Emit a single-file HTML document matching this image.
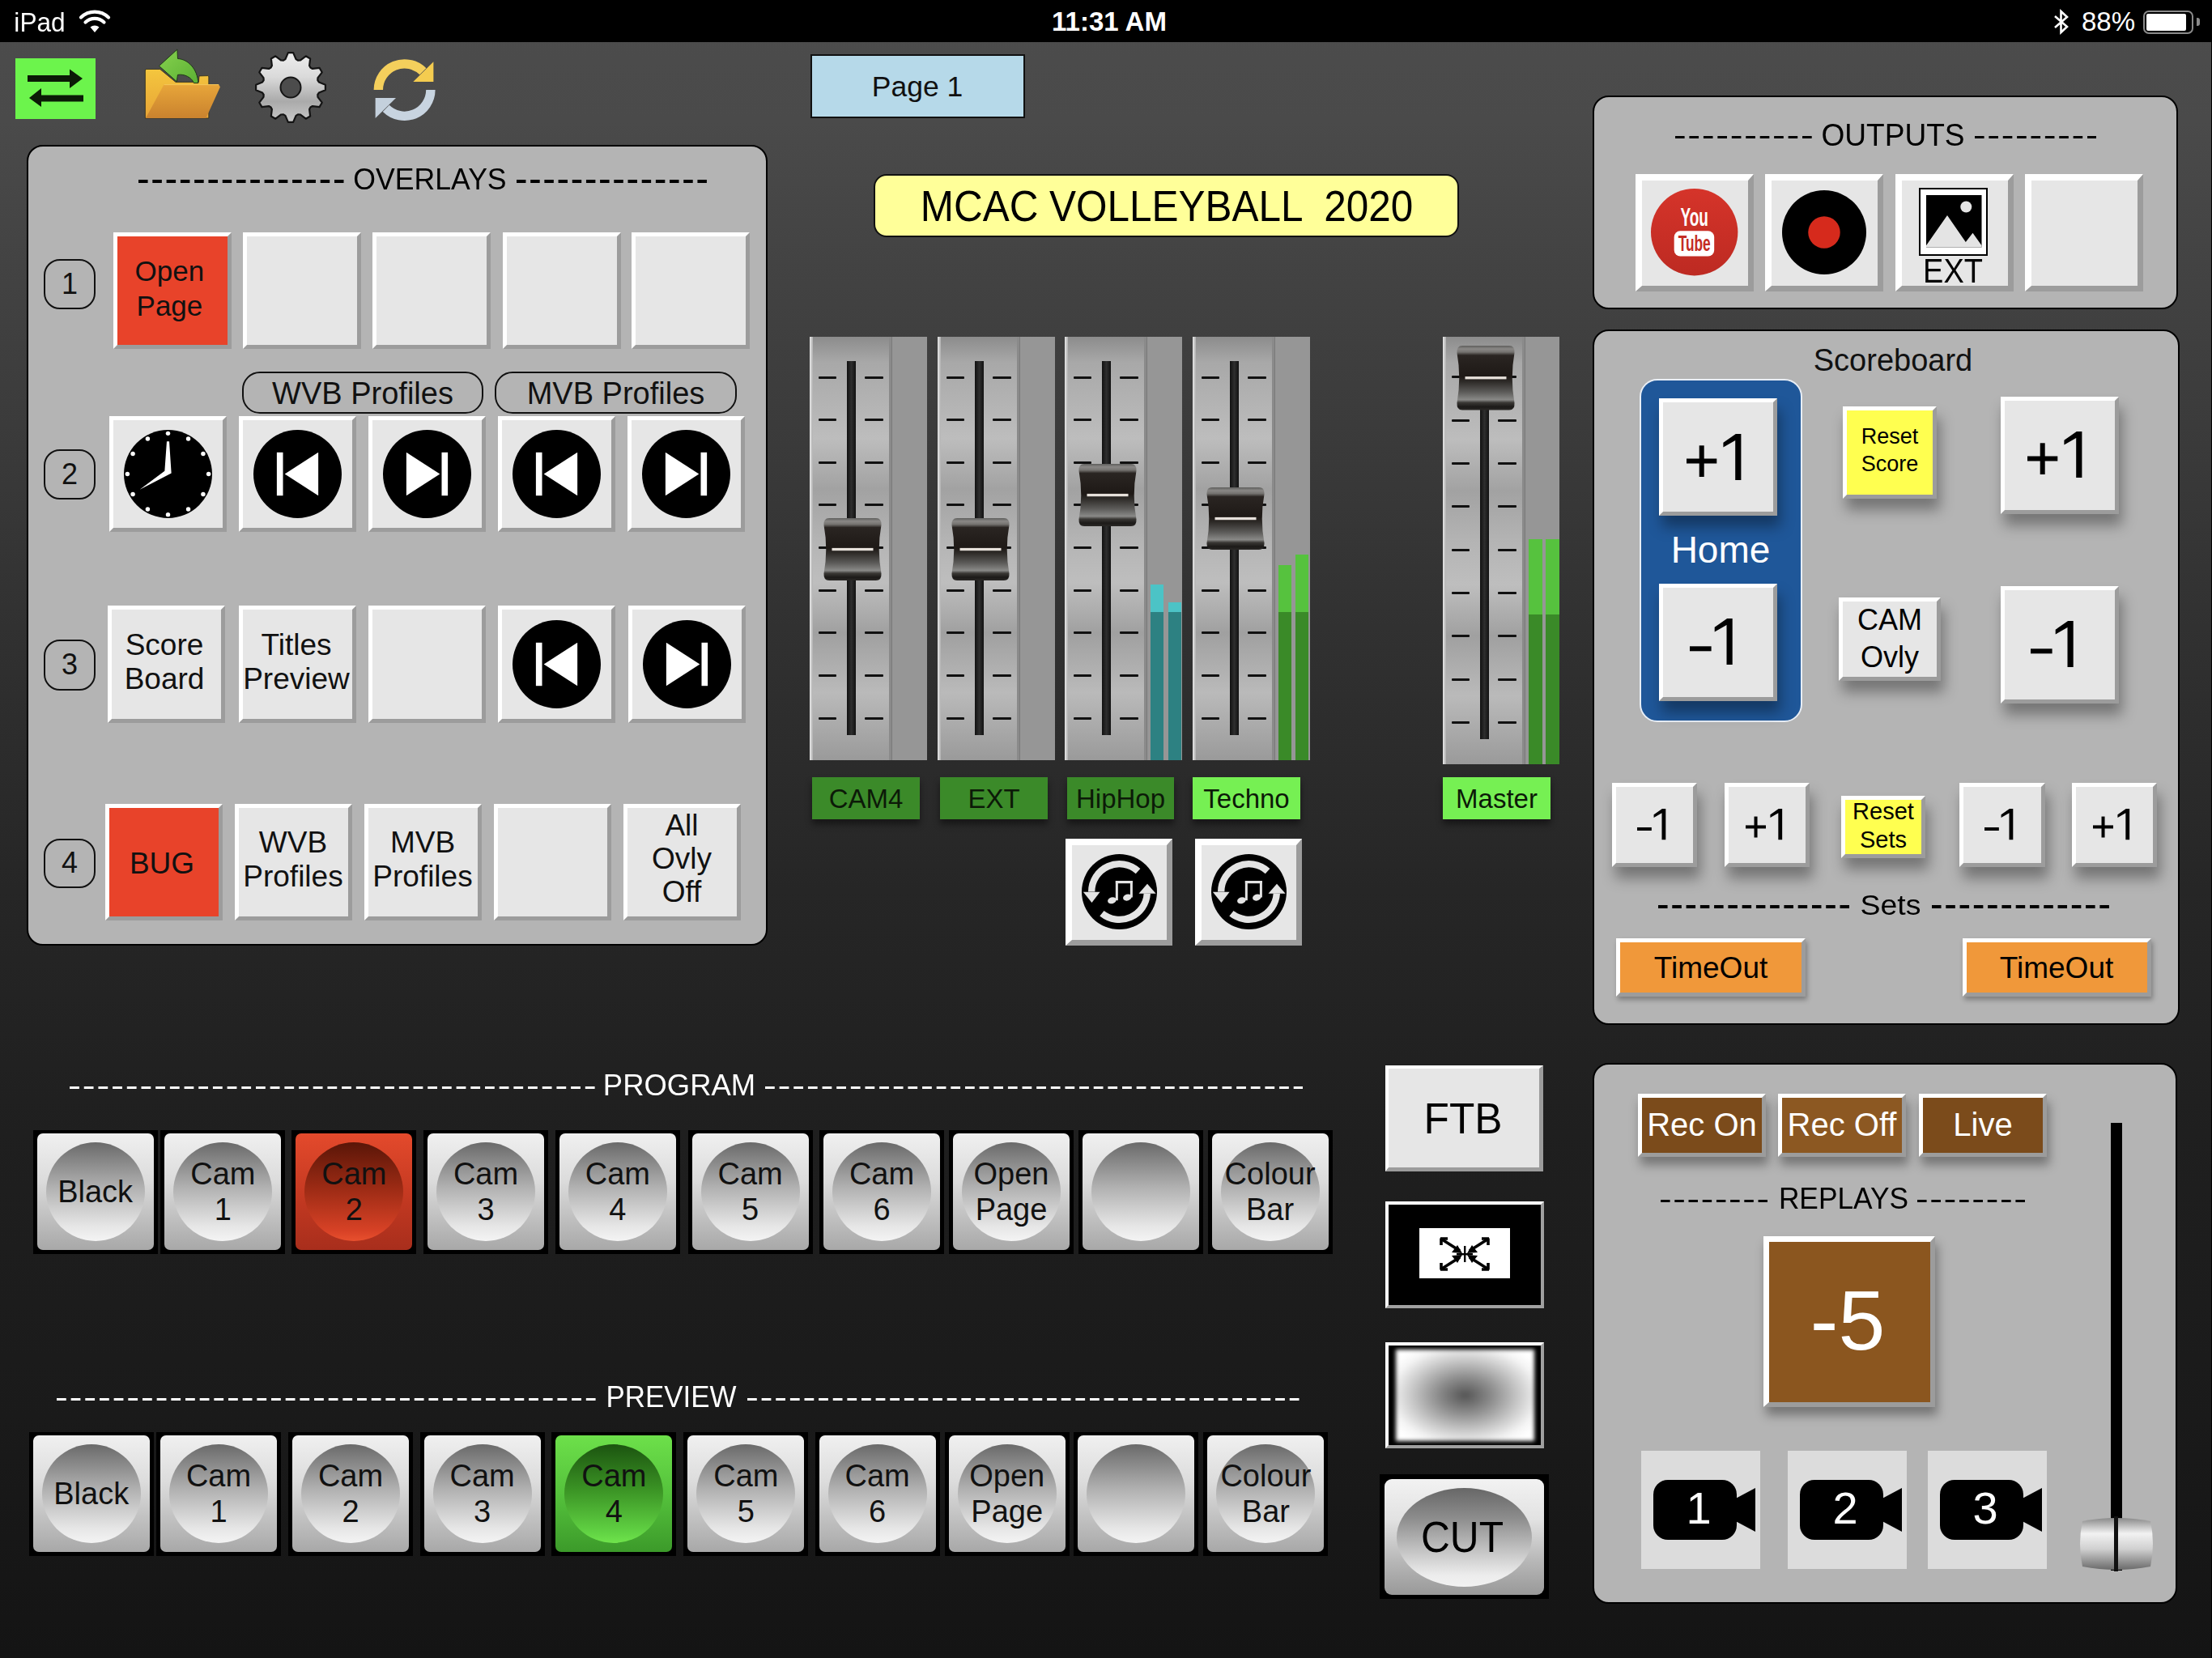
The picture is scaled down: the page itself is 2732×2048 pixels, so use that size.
<!DOCTYPE html><html><head><meta charset="utf-8"><style>
*{margin:0;padding:0;box-sizing:content-box}
html,body{width:2732px;height:2048px;overflow:hidden}
body{position:relative;font-family:"Liberation Sans",sans-serif;
background:linear-gradient(180deg,#4c4c4c 0px,#4a4a4a 150px,#3e3e3e 450px,#303030 800px,#262626 1100px,#1f1f1f 1400px,#1a1a1a 1750px,#141414 2048px);}
body>div{position:absolute}
.t{position:absolute;line-height:1;white-space:pre}
svg{position:absolute;overflow:visible}

.sl{background:linear-gradient(180deg,#8c8c8c 0%,#a8a8a8 6%,#bdbdbd 24%,#a2a2a2 36%,#b4b4b4 48%,#bebebe 58%,#a0a0a0 70%,#bababa 84%,#9a9a9a 100%);}
.sl:before{content:"";position:absolute;left:0;top:0;bottom:0;width:4px;background:linear-gradient(90deg,#e8e8e8,#b0b0b0)}
.sl:after{content:"";position:absolute;right:0;top:0;bottom:0;width:3px;background:#8a8a8a}
.mt{background:#969696;border-left:1px solid #7a7a7a;box-sizing:border-box}

.pb{background:linear-gradient(180deg,#f0f0f0 0%,#dcdcdc 40%,#a8a8a8 100%);border-radius:7px}
.pr{background:linear-gradient(180deg,#e44a2c 0%,#c63a22 50%,#a82e1c 100%);border-radius:7px}
.pg{background:linear-gradient(180deg,#6de04a 0%,#55c23c 50%,#3c9a2a 100%);border-radius:7px}
.cc{border-radius:50%;background:linear-gradient(180deg,#6a6a6a 0%,#b0b0b0 45%,#e6e6e6 85%,#f4f4f4 100%)}
.cr{border-radius:50%;background:linear-gradient(180deg,#5a1608 0%,#9a2a14 45%,#d84226 90%,#e8502e 100%)}
.cg{border-radius:50%;background:linear-gradient(180deg,#1c5410 0%,#3a9224 45%,#62d444 90%,#70e44c 100%)}
</style></head><body><div style="left:0px;top:0px;width:2732px;height:52px;background:#000"></div>
<div style="left:2731px;top:52px;width:1px;height:1996px;background:#000"></div>
<div class="t" style="left:-551.5px;width:1200px;text-align:center;top:9.6px;font-size:34px;color:#fff;font-weight:normal;transform:scaleX(0.93);">iPad</div>
<div class="t" style="left:770px;width:1200px;text-align:center;top:10.3px;font-size:33px;color:#fff;font-weight:bold;">11:31 AM</div>
<div class="t" style="left:1437px;width:1200px;text-align:right;top:10.3px;font-size:33px;color:#fff;font-weight:normal;">88%</div>
<svg style="left:98px;top:13px" width="38" height="28" viewBox="0 0 38 28"><path d="M19 27 L13.5 20.5 A8.5 8.5 0 0 1 24.5 20.5 Z" fill="#fff"/><path d="M7.5 14.5 A16.5 16.5 0 0 1 30.5 14.5" stroke="#fff" stroke-width="4.2" fill="none" stroke-linecap="round"/><path d="M2 8.5 A24.5 24.5 0 0 1 36 8.5" stroke="#fff" stroke-width="4.2" fill="none" stroke-linecap="round"/></svg>
<svg style="left:2536px;top:11px" width="20" height="32" viewBox="0 0 20 32"><path d="M2 9 L17 22 L9.5 29 L9.5 3 L17 10 L2 23" stroke="#fff" stroke-width="2.6" fill="none" stroke-linejoin="miter"/></svg>
<div style="left:2647px;top:13px;width:62px;height:29px;border:2.5px solid #8a8a8a;border-radius:7px;box-sizing:border-box"></div>
<div style="left:2651px;top:17px;width:49px;height:21px;background:#fff;border-radius:2px"></div>
<div style="left:2713px;top:22px;width:4px;height:10px;background:#8a8a8a;border-radius:0 3px 3px 0"></div>
<div style="left:19px;top:72px;width:99px;height:75px;background:#6cf44c"></div>
<svg style="left:19px;top:72px" width="99" height="75" viewBox="0 0 99 75"><rect x="15" y="21" width="53" height="8" fill="#0b1a06"/><path d="M67 13.5 L83 25 L67 37 Z" fill="#0b1a06"/><rect x="31" y="45.5" width="53" height="8" fill="#0b1a06"/><path d="M32 37 L17 49 L32 60 Z" fill="#0b1a06"/></svg>
<svg style="left:170px;top:55px" width="110" height="100" viewBox="0 0 110 100"><defs><linearGradient id="fg1" x1="0" y1="0" x2="0" y2="1"><stop offset="0" stop-color="#f4c63e"/><stop offset="1" stop-color="#e8a436"/></linearGradient><linearGradient id="fg2" x1="0" y1="0" x2="0" y2="1"><stop offset="0" stop-color="#e8a63a"/><stop offset="1" stop-color="#c9822e"/></linearGradient><linearGradient id="ag" x1="0" y1="0" x2="1" y2="1"><stop offset="0" stop-color="#86d24e"/><stop offset="1" stop-color="#5cb034"/></linearGradient></defs><path d="M9.35 32 Q9.35 30.5 11 30.5 L27.7 30.5 L47 46.4 L75.4 46.4 L76 38.9 L86.9 38.6 Q87.8 39 87.8 40 L87.8 91 L9.35 91 Z" fill="url(#fg1)" stroke="#2a2a1a" stroke-width="0.8"/><path d="M26.5 26.5 L48.9 6 L49.5 17.5 C62 18 74 30 74.8 47.6 L69.4 47.6 C67 41 58 36 49.5 37.4 L48.3 45.8 Z" fill="url(#ag)" stroke="#20361a" stroke-width="1"/><path d="M32.6 49.2 L100.1 49.2 L101.9 52.5 L84.4 91.1 L9.95 91.1 Z" fill="url(#fg2)"/><path d="M32.6 49.6 L100.1 49.6" stroke="#f6c85a" stroke-width="1"/></svg>
<svg style="left:309.1px;top:57.6px" width="100" height="100" viewBox="0 0 100 100"><defs><linearGradient id="gg" x1="0" y1="0" x2="0" y2="1"><stop offset="0" stop-color="#eeeeee"/><stop offset="0.35" stop-color="#dadada"/><stop offset="0.7" stop-color="#aaaaaa"/><stop offset="1" stop-color="#cacaca"/></linearGradient></defs><path d="M41.07 16.68 L43.47 15.11 L46.85 7.12 L53.15 7.12 L56.53 15.11 L58.93 16.68 L61.79 16.52 L68.71 11.29 L74.17 14.44 L73.10 23.05 L74.40 25.60 L76.95 26.90 L85.56 25.83 L88.71 31.29 L83.48 38.21 L83.32 41.07 L84.89 43.47 L92.88 46.85 L92.88 53.15 L84.89 56.53 L83.32 58.93 L83.48 61.79 L88.71 68.71 L85.56 74.17 L76.95 73.10 L74.40 74.40 L73.10 76.95 L74.17 85.56 L68.71 88.71 L61.79 83.48 L58.93 83.32 L56.53 84.89 L53.15 92.88 L46.85 92.88 L43.47 84.89 L41.07 83.32 L38.21 83.48 L31.29 88.71 L25.83 85.56 L26.90 76.95 L25.60 74.40 L23.05 73.10 L14.44 74.17 L11.29 68.71 L16.52 61.79 L16.68 58.93 L15.11 56.53 L7.12 53.15 L7.12 46.85 L15.11 43.47 L16.68 41.07 L16.52 38.21 L11.29 31.29 L14.44 25.83 L23.05 26.90 L25.60 25.60 L26.90 23.05 L25.83 14.44 L31.29 11.29 L38.21 16.52 Z" fill="url(#gg)" stroke="#141414" stroke-width="2.2" stroke-linejoin="round"/><circle cx="50" cy="50" r="12.5" fill="#4c4c4c" stroke="#141414" stroke-width="2"/></svg>
<svg style="left:450px;top:62px" width="100" height="98" viewBox="0 0 100 98"><path d="M17.3 49.1 A32.3 32.3 0 0 1 72.4 26.3" stroke="#f4cf5c" stroke-width="11.4" fill="none"/><path d="M60.3 39 L85.4 39 L85.4 14.2 Z" fill="#f4cc50"/><path d="M81.9 49.1 A32.3 32.3 0 0 1 26.8 71.9" stroke="#c8d4e0" stroke-width="11.4" fill="none"/><path d="M13.6 59.1 L39 59.1 L13.6 83.9 Z" fill="#c4d0dc"/></svg>
<div style="left:1001px;top:67px;width:265px;height:79px;background:#b6d9e9;border:2px solid #111;box-sizing:border-box"></div>
<div class="t" style="left:533px;width:1200px;text-align:center;top:89.8px;font-size:35.5px;color:#111;font-weight:normal;">Page 1</div>
<div style="left:1079px;top:215px;width:723px;height:78px;background:#ffff99;border:2px solid #111;border-radius:16px;box-sizing:border-box"></div>
<div class="t" style="left:840.5px;width:1200px;text-align:center;top:226.9px;font-size:54px;color:#000;font-weight:normal;transform:scaleX(0.916);">MCAC VOLLEYBALL  2020</div>
<div style="left:33px;top:179px;width:915px;height:989px;background:#b4b4b4;border:2.5px solid #000;border-radius:20px;box-sizing:border-box"></div>
<div class="t" style="left:-69.10000000000002px;width:1200px;text-align:center;top:202.7px;font-size:37px;color:#000;font-weight:normal;transform:scaleX(0.962);">OVERLAYS</div>
<div style="left:171px;top:222.1px;width:253.5px;height:3.6px;background-image:linear-gradient(90deg,transparent 0 5.786px,#000 5.786px 17.286px);background-size:17.286px 100%;background-repeat:repeat-x;background-position:right top"></div>
<div style="left:638px;top:222.1px;width:235px;height:3.6px;background-image:linear-gradient(90deg,#000 0 11.5px,transparent 11.5px 17.192px);background-size:17.192px 100%;background-repeat:repeat-x;background-position:left top"></div>
<div style="left:54px;top:320px;width:64px;height:62px;border:2px solid #111;border-radius:20px;box-sizing:border-box"></div>
<div style="left:54px;top:555px;width:64px;height:62px;border:2px solid #111;border-radius:20px;box-sizing:border-box"></div>
<div style="left:54px;top:790px;width:64px;height:63px;border:2px solid #111;border-radius:20px;box-sizing:border-box"></div>
<div style="left:54px;top:1036px;width:64px;height:61px;border:2px solid #111;border-radius:20px;box-sizing:border-box"></div>
<div class="t" style="left:-514px;width:1200px;text-align:center;top:332.8px;font-size:36px;color:#111;font-weight:normal;">1</div>
<div class="t" style="left:-514px;width:1200px;text-align:center;top:567.8px;font-size:36px;color:#111;font-weight:normal;">2</div>
<div class="t" style="left:-514px;width:1200px;text-align:center;top:803.3px;font-size:36px;color:#111;font-weight:normal;">3</div>
<div class="t" style="left:-514px;width:1200px;text-align:center;top:1048.3px;font-size:36px;color:#111;font-weight:normal;">4</div>
<div style="left:140px;top:287px;width:136px;height:134px;background:#e8432a;border-style:solid;border-width:5px 5px 5px 5px;border-color:#ffffff #9c9c9c #9c9c9c #ffffff;"></div>
<div style="left:300px;top:287px;width:136px;height:134px;background:#e6e6e6;border-style:solid;border-width:5px 5px 5px 5px;border-color:#ffffff #9c9c9c #9c9c9c #ffffff;"></div>
<div style="left:460px;top:287px;width:136px;height:134px;background:#e6e6e6;border-style:solid;border-width:5px 5px 5px 5px;border-color:#ffffff #9c9c9c #9c9c9c #ffffff;"></div>
<div style="left:621px;top:287px;width:136px;height:134px;background:#e6e6e6;border-style:solid;border-width:5px 5px 5px 5px;border-color:#ffffff #9c9c9c #9c9c9c #ffffff;"></div>
<div style="left:780px;top:287px;width:136px;height:134px;background:#e6e6e6;border-style:solid;border-width:5px 5px 5px 5px;border-color:#ffffff #9c9c9c #9c9c9c #ffffff;"></div>
<div class="t" style="left:-390.6px;width:1200px;text-align:center;top:316.5px;font-size:35px;color:#111;font-weight:normal;">Open</div>
<div class="t" style="left:-390.6px;width:1200px;text-align:center;top:359.9px;font-size:35px;color:#111;font-weight:normal;">Page</div>
<div style="left:299px;top:459px;width:298px;height:52px;border:2px solid #111;border-radius:22px;box-sizing:border-box"></div>
<div style="left:611px;top:459px;width:299px;height:52px;border:2px solid #111;border-radius:22px;box-sizing:border-box"></div>
<div class="t" style="left:-152px;width:1200px;text-align:center;top:466.5px;font-size:38px;color:#111;font-weight:normal;">WVB Profiles</div>
<div class="t" style="left:160.5px;width:1200px;text-align:center;top:466.5px;font-size:38px;color:#111;font-weight:normal;">MVB Profiles</div>
<div style="left:135px;top:514px;width:135px;height:133px;background:#e6e6e6;border-style:solid;border-width:5px 5px 5px 5px;border-color:#ffffff #9c9c9c #9c9c9c #ffffff;"></div>
<div style="left:295px;top:514px;width:135px;height:133px;background:#e6e6e6;border-style:solid;border-width:5px 5px 5px 5px;border-color:#ffffff #9c9c9c #9c9c9c #ffffff;"></div>
<div style="left:455px;top:514px;width:135px;height:133px;background:#e6e6e6;border-style:solid;border-width:5px 5px 5px 5px;border-color:#ffffff #9c9c9c #9c9c9c #ffffff;"></div>
<div style="left:615px;top:514px;width:135px;height:133px;background:#e6e6e6;border-style:solid;border-width:5px 5px 5px 5px;border-color:#ffffff #9c9c9c #9c9c9c #ffffff;"></div>
<div style="left:775px;top:514px;width:135px;height:133px;background:#e6e6e6;border-style:solid;border-width:5px 5px 5px 5px;border-color:#ffffff #9c9c9c #9c9c9c #ffffff;"></div>
<svg style="left:153.0px;top:531.0px" width="109" height="109" viewBox="-50 -50 100 100"><circle r="50" fill="#000"/><circle cx="0.00" cy="-46.00" r="2.5" fill="#fff"/><circle cx="23.00" cy="-39.84" r="2.5" fill="#fff"/><circle cx="39.84" cy="-23.00" r="2.5" fill="#fff"/><circle cx="46.00" cy="-0.00" r="2.5" fill="#fff"/><circle cx="39.84" cy="23.00" r="2.5" fill="#fff"/><circle cx="23.00" cy="39.84" r="2.5" fill="#fff"/><circle cx="0.00" cy="46.00" r="2.5" fill="#fff"/><circle cx="-23.00" cy="39.84" r="2.5" fill="#fff"/><circle cx="-39.84" cy="23.00" r="2.5" fill="#fff"/><circle cx="-46.00" cy="0.00" r="2.5" fill="#fff"/><circle cx="-39.84" cy="-23.00" r="2.5" fill="#fff"/><circle cx="-23.00" cy="-39.84" r="2.5" fill="#fff"/><path d="M-1.4 -37 L1.4 -37 L3.8 -1 L-32 17.6 L-3.8 -3.5 Z" fill="#fff"/></svg>
<svg style="left:312.5px;top:531.0px" width="109" height="109" viewBox="-50 -50 100 100"><circle r="50" fill="#000"/><rect x="-23.5" y="-24.5" width="7" height="49" fill="#fff"/><path d="M-14.5 0 L23.5 -24.5 L23.5 24.5 Z" fill="#fff"/></svg>
<svg style="left:473.0px;top:531.0px" width="109" height="109" viewBox="-50 -50 100 100"><circle r="50" fill="#000"/><rect x="16.5" y="-24.5" width="7" height="49" fill="#fff"/><path d="M14.5 0 L-23.5 -24.5 L-23.5 24.5 Z" fill="#fff"/></svg>
<svg style="left:633.0px;top:531.0px" width="109" height="109" viewBox="-50 -50 100 100"><circle r="50" fill="#000"/><rect x="-23.5" y="-24.5" width="7" height="49" fill="#fff"/><path d="M-14.5 0 L23.5 -24.5 L23.5 24.5 Z" fill="#fff"/></svg>
<svg style="left:793.0px;top:531.0px" width="109" height="109" viewBox="-50 -50 100 100"><circle r="50" fill="#000"/><rect x="16.5" y="-24.5" width="7" height="49" fill="#fff"/><path d="M14.5 0 L-23.5 -24.5 L-23.5 24.5 Z" fill="#fff"/></svg>
<div style="left:133px;top:748px;width:135px;height:135px;background:#e6e6e6;border-style:solid;border-width:5px 5px 5px 5px;border-color:#ffffff #9c9c9c #9c9c9c #ffffff;"></div>
<div style="left:295px;top:748px;width:135px;height:135px;background:#e6e6e6;border-style:solid;border-width:5px 5px 5px 5px;border-color:#ffffff #9c9c9c #9c9c9c #ffffff;"></div>
<div style="left:455px;top:748px;width:135px;height:135px;background:#e6e6e6;border-style:solid;border-width:5px 5px 5px 5px;border-color:#ffffff #9c9c9c #9c9c9c #ffffff;"></div>
<div style="left:615px;top:748px;width:135px;height:135px;background:#e6e6e6;border-style:solid;border-width:5px 5px 5px 5px;border-color:#ffffff #9c9c9c #9c9c9c #ffffff;"></div>
<div style="left:776px;top:748px;width:135px;height:135px;background:#e6e6e6;border-style:solid;border-width:5px 5px 5px 5px;border-color:#ffffff #9c9c9c #9c9c9c #ffffff;"></div>
<div class="t" style="left:-397px;width:1200px;text-align:center;top:777.8px;font-size:37px;color:#111;font-weight:normal;">Score</div>
<div class="t" style="left:-397px;width:1200px;text-align:center;top:819.8px;font-size:37px;color:#111;font-weight:normal;">Board</div>
<div class="t" style="left:-234px;width:1200px;text-align:center;top:777.8px;font-size:37px;color:#111;font-weight:normal;">Titles</div>
<div class="t" style="left:-234px;width:1200px;text-align:center;top:819.8px;font-size:37px;color:#111;font-weight:normal;">Preview</div>
<svg style="left:633.0px;top:766.0px" width="109" height="109" viewBox="-50 -50 100 100"><circle r="50" fill="#000"/><rect x="-23.5" y="-24.5" width="7" height="49" fill="#fff"/><path d="M-14.5 0 L23.5 -24.5 L23.5 24.5 Z" fill="#fff"/></svg>
<svg style="left:793.5px;top:766.0px" width="109" height="109" viewBox="-50 -50 100 100"><circle r="50" fill="#000"/><rect x="16.5" y="-24.5" width="7" height="49" fill="#fff"/><path d="M14.5 0 L-23.5 -24.5 L-23.5 24.5 Z" fill="#fff"/></svg>
<div style="left:130px;top:993px;width:135px;height:134px;background:#e8432a;border-style:solid;border-width:5px 5px 5px 5px;border-color:#ffffff #9c9c9c #9c9c9c #ffffff;"></div>
<div style="left:290px;top:993px;width:135px;height:134px;background:#e6e6e6;border-style:solid;border-width:5px 5px 5px 5px;border-color:#ffffff #9c9c9c #9c9c9c #ffffff;"></div>
<div style="left:450px;top:993px;width:135px;height:134px;background:#e6e6e6;border-style:solid;border-width:5px 5px 5px 5px;border-color:#ffffff #9c9c9c #9c9c9c #ffffff;"></div>
<div style="left:610px;top:993px;width:135px;height:134px;background:#e6e6e6;border-style:solid;border-width:5px 5px 5px 5px;border-color:#ffffff #9c9c9c #9c9c9c #ffffff;"></div>
<div style="left:770px;top:993px;width:135px;height:134px;background:#e6e6e6;border-style:solid;border-width:5px 5px 5px 5px;border-color:#ffffff #9c9c9c #9c9c9c #ffffff;"></div>
<div class="t" style="left:-400px;width:1200px;text-align:center;top:1048.1px;font-size:37px;color:#111;font-weight:normal;">BUG</div>
<div class="t" style="left:-238px;width:1200px;text-align:center;top:1021.5px;font-size:37px;color:#111;font-weight:normal;">WVB</div>
<div class="t" style="left:-238px;width:1200px;text-align:center;top:1063.5px;font-size:37px;color:#111;font-weight:normal;">Profiles</div>
<div class="t" style="left:-78px;width:1200px;text-align:center;top:1021.5px;font-size:37px;color:#111;font-weight:normal;">MVB</div>
<div class="t" style="left:-78px;width:1200px;text-align:center;top:1063.5px;font-size:37px;color:#111;font-weight:normal;">Profiles</div>
<div class="t" style="left:242px;width:1200px;text-align:center;top:1001.1px;font-size:37px;color:#111;font-weight:normal;">All</div>
<div class="t" style="left:242px;width:1200px;text-align:center;top:1042.1px;font-size:37px;color:#111;font-weight:normal;">Ovly</div>
<div class="t" style="left:242px;width:1200px;text-align:center;top:1083.1px;font-size:37px;color:#111;font-weight:normal;">Off</div>
<div class="sl" style="left:1000px;top:416px;width:101px;height:523px"></div>
<div class="mt" style="left:1101px;top:416px;width:44px;height:523px;"></div>
<div style="left:1011px;top:465px;width:22px;height:3px;background:#111;border-radius:1px"></div>
<div style="left:1068px;top:465px;width:23px;height:3px;background:#111;border-radius:1px"></div>
<div style="left:1011px;top:517px;width:22px;height:3px;background:#111;border-radius:1px"></div>
<div style="left:1068px;top:517px;width:23px;height:3px;background:#111;border-radius:1px"></div>
<div style="left:1011px;top:570px;width:22px;height:3px;background:#111;border-radius:1px"></div>
<div style="left:1068px;top:570px;width:23px;height:3px;background:#111;border-radius:1px"></div>
<div style="left:1011px;top:622px;width:22px;height:3px;background:#111;border-radius:1px"></div>
<div style="left:1068px;top:622px;width:23px;height:3px;background:#111;border-radius:1px"></div>
<div style="left:1011px;top:675px;width:22px;height:3px;background:#111;border-radius:1px"></div>
<div style="left:1068px;top:675px;width:23px;height:3px;background:#111;border-radius:1px"></div>
<div style="left:1011px;top:728px;width:22px;height:3px;background:#111;border-radius:1px"></div>
<div style="left:1068px;top:728px;width:23px;height:3px;background:#111;border-radius:1px"></div>
<div style="left:1011px;top:780px;width:22px;height:3px;background:#111;border-radius:1px"></div>
<div style="left:1068px;top:780px;width:23px;height:3px;background:#111;border-radius:1px"></div>
<div style="left:1011px;top:833px;width:22px;height:3px;background:#111;border-radius:1px"></div>
<div style="left:1068px;top:833px;width:23px;height:3px;background:#111;border-radius:1px"></div>
<div style="left:1011px;top:886px;width:22px;height:3px;background:#111;border-radius:1px"></div>
<div style="left:1068px;top:886px;width:23px;height:3px;background:#111;border-radius:1px"></div>
<div style="left:1046px;top:446px;width:11px;height:462px;background:linear-gradient(90deg,#111,#2e2e2e 50%,#111)"></div>
<svg style="left:1016.5px;top:640px" width="72" height="77" viewBox="0 0 72 77"><defs><linearGradient id="kg1000" x1="0" y1="0" x2="0" y2="1"><stop offset="0" stop-color="#5e5e5c"/><stop offset="0.05" stop-color="#8a8886"/><stop offset="0.1" stop-color="#74726f"/><stop offset="0.15" stop-color="#2a2522"/><stop offset="0.48" stop-color="#1e1916"/><stop offset="0.56" stop-color="#2e2b28"/><stop offset="0.72" stop-color="#5c5b59"/><stop offset="0.84" stop-color="#898987"/><stop offset="0.885" stop-color="#3a3835"/><stop offset="0.95" stop-color="#1c1a18"/><stop offset="1" stop-color="#2a2826"/></linearGradient></defs><path d="M7 0 L65 0 Q72 0 71.5 8.5 Q66 38.5 71.5 68.5 Q72 77 65 77 L7 77 Q0 77 0.5 68.5 Q6 38.5 0.5 8.5 Q0 0 7 0 Z" fill="url(#kg1000)"/><rect x="10.5" y="36.9" width="51" height="3.3" fill="#e6e0da"/></svg>
<div class="sl" style="left:1158px;top:416px;width:101px;height:523px"></div>
<div class="mt" style="left:1259px;top:416px;width:44px;height:523px;"></div>
<div style="left:1169px;top:465px;width:22px;height:3px;background:#111;border-radius:1px"></div>
<div style="left:1226px;top:465px;width:23px;height:3px;background:#111;border-radius:1px"></div>
<div style="left:1169px;top:517px;width:22px;height:3px;background:#111;border-radius:1px"></div>
<div style="left:1226px;top:517px;width:23px;height:3px;background:#111;border-radius:1px"></div>
<div style="left:1169px;top:570px;width:22px;height:3px;background:#111;border-radius:1px"></div>
<div style="left:1226px;top:570px;width:23px;height:3px;background:#111;border-radius:1px"></div>
<div style="left:1169px;top:622px;width:22px;height:3px;background:#111;border-radius:1px"></div>
<div style="left:1226px;top:622px;width:23px;height:3px;background:#111;border-radius:1px"></div>
<div style="left:1169px;top:675px;width:22px;height:3px;background:#111;border-radius:1px"></div>
<div style="left:1226px;top:675px;width:23px;height:3px;background:#111;border-radius:1px"></div>
<div style="left:1169px;top:728px;width:22px;height:3px;background:#111;border-radius:1px"></div>
<div style="left:1226px;top:728px;width:23px;height:3px;background:#111;border-radius:1px"></div>
<div style="left:1169px;top:780px;width:22px;height:3px;background:#111;border-radius:1px"></div>
<div style="left:1226px;top:780px;width:23px;height:3px;background:#111;border-radius:1px"></div>
<div style="left:1169px;top:833px;width:22px;height:3px;background:#111;border-radius:1px"></div>
<div style="left:1226px;top:833px;width:23px;height:3px;background:#111;border-radius:1px"></div>
<div style="left:1169px;top:886px;width:22px;height:3px;background:#111;border-radius:1px"></div>
<div style="left:1226px;top:886px;width:23px;height:3px;background:#111;border-radius:1px"></div>
<div style="left:1204px;top:446px;width:11px;height:462px;background:linear-gradient(90deg,#111,#2e2e2e 50%,#111)"></div>
<svg style="left:1174.5px;top:640px" width="72" height="77" viewBox="0 0 72 77"><defs><linearGradient id="kg1158" x1="0" y1="0" x2="0" y2="1"><stop offset="0" stop-color="#5e5e5c"/><stop offset="0.05" stop-color="#8a8886"/><stop offset="0.1" stop-color="#74726f"/><stop offset="0.15" stop-color="#2a2522"/><stop offset="0.48" stop-color="#1e1916"/><stop offset="0.56" stop-color="#2e2b28"/><stop offset="0.72" stop-color="#5c5b59"/><stop offset="0.84" stop-color="#898987"/><stop offset="0.885" stop-color="#3a3835"/><stop offset="0.95" stop-color="#1c1a18"/><stop offset="1" stop-color="#2a2826"/></linearGradient></defs><path d="M7 0 L65 0 Q72 0 71.5 8.5 Q66 38.5 71.5 68.5 Q72 77 65 77 L7 77 Q0 77 0.5 68.5 Q6 38.5 0.5 8.5 Q0 0 7 0 Z" fill="url(#kg1158)"/><rect x="10.5" y="36.9" width="51" height="3.3" fill="#e6e0da"/></svg>
<div class="sl" style="left:1315px;top:416px;width:101px;height:523px"></div>
<div class="mt" style="left:1416px;top:416px;width:44px;height:523px;"></div>
<div style="left:1421px;top:722px;width:16px;height:34px;background:#4cc3c6"></div>
<div style="left:1421px;top:756px;width:16px;height:183px;background:#2d8182"></div>
<div style="left:1443px;top:744px;width:16px;height:12px;background:#4cc3c6"></div>
<div style="left:1443px;top:756px;width:16px;height:183px;background:#2d8182"></div>
<div style="left:1326px;top:465px;width:22px;height:3px;background:#111;border-radius:1px"></div>
<div style="left:1383px;top:465px;width:23px;height:3px;background:#111;border-radius:1px"></div>
<div style="left:1326px;top:517px;width:22px;height:3px;background:#111;border-radius:1px"></div>
<div style="left:1383px;top:517px;width:23px;height:3px;background:#111;border-radius:1px"></div>
<div style="left:1326px;top:570px;width:22px;height:3px;background:#111;border-radius:1px"></div>
<div style="left:1383px;top:570px;width:23px;height:3px;background:#111;border-radius:1px"></div>
<div style="left:1326px;top:622px;width:22px;height:3px;background:#111;border-radius:1px"></div>
<div style="left:1383px;top:622px;width:23px;height:3px;background:#111;border-radius:1px"></div>
<div style="left:1326px;top:675px;width:22px;height:3px;background:#111;border-radius:1px"></div>
<div style="left:1383px;top:675px;width:23px;height:3px;background:#111;border-radius:1px"></div>
<div style="left:1326px;top:728px;width:22px;height:3px;background:#111;border-radius:1px"></div>
<div style="left:1383px;top:728px;width:23px;height:3px;background:#111;border-radius:1px"></div>
<div style="left:1326px;top:780px;width:22px;height:3px;background:#111;border-radius:1px"></div>
<div style="left:1383px;top:780px;width:23px;height:3px;background:#111;border-radius:1px"></div>
<div style="left:1326px;top:833px;width:22px;height:3px;background:#111;border-radius:1px"></div>
<div style="left:1383px;top:833px;width:23px;height:3px;background:#111;border-radius:1px"></div>
<div style="left:1326px;top:886px;width:22px;height:3px;background:#111;border-radius:1px"></div>
<div style="left:1383px;top:886px;width:23px;height:3px;background:#111;border-radius:1px"></div>
<div style="left:1361px;top:446px;width:11px;height:462px;background:linear-gradient(90deg,#111,#2e2e2e 50%,#111)"></div>
<svg style="left:1331.5px;top:573px" width="72" height="77" viewBox="0 0 72 77"><defs><linearGradient id="kg1315" x1="0" y1="0" x2="0" y2="1"><stop offset="0" stop-color="#5e5e5c"/><stop offset="0.05" stop-color="#8a8886"/><stop offset="0.1" stop-color="#74726f"/><stop offset="0.15" stop-color="#2a2522"/><stop offset="0.48" stop-color="#1e1916"/><stop offset="0.56" stop-color="#2e2b28"/><stop offset="0.72" stop-color="#5c5b59"/><stop offset="0.84" stop-color="#898987"/><stop offset="0.885" stop-color="#3a3835"/><stop offset="0.95" stop-color="#1c1a18"/><stop offset="1" stop-color="#2a2826"/></linearGradient></defs><path d="M7 0 L65 0 Q72 0 71.5 8.5 Q66 38.5 71.5 68.5 Q72 77 65 77 L7 77 Q0 77 0.5 68.5 Q6 38.5 0.5 8.5 Q0 0 7 0 Z" fill="url(#kg1315)"/><rect x="10.5" y="36.9" width="51" height="3.3" fill="#e6e0da"/></svg>
<div class="sl" style="left:1473px;top:416px;width:101px;height:523px"></div>
<div class="mt" style="left:1574px;top:416px;width:44px;height:523px;"></div>
<div style="left:1579px;top:698px;width:16px;height:58px;background:#56c23e"></div>
<div style="left:1579px;top:756px;width:16px;height:183px;background:#3a8a28"></div>
<div style="left:1600px;top:685px;width:16px;height:71px;background:#56c23e"></div>
<div style="left:1600px;top:756px;width:16px;height:183px;background:#3a8a28"></div>
<div style="left:1484px;top:465px;width:22px;height:3px;background:#111;border-radius:1px"></div>
<div style="left:1541px;top:465px;width:23px;height:3px;background:#111;border-radius:1px"></div>
<div style="left:1484px;top:517px;width:22px;height:3px;background:#111;border-radius:1px"></div>
<div style="left:1541px;top:517px;width:23px;height:3px;background:#111;border-radius:1px"></div>
<div style="left:1484px;top:570px;width:22px;height:3px;background:#111;border-radius:1px"></div>
<div style="left:1541px;top:570px;width:23px;height:3px;background:#111;border-radius:1px"></div>
<div style="left:1484px;top:622px;width:22px;height:3px;background:#111;border-radius:1px"></div>
<div style="left:1541px;top:622px;width:23px;height:3px;background:#111;border-radius:1px"></div>
<div style="left:1484px;top:675px;width:22px;height:3px;background:#111;border-radius:1px"></div>
<div style="left:1541px;top:675px;width:23px;height:3px;background:#111;border-radius:1px"></div>
<div style="left:1484px;top:728px;width:22px;height:3px;background:#111;border-radius:1px"></div>
<div style="left:1541px;top:728px;width:23px;height:3px;background:#111;border-radius:1px"></div>
<div style="left:1484px;top:780px;width:22px;height:3px;background:#111;border-radius:1px"></div>
<div style="left:1541px;top:780px;width:23px;height:3px;background:#111;border-radius:1px"></div>
<div style="left:1484px;top:833px;width:22px;height:3px;background:#111;border-radius:1px"></div>
<div style="left:1541px;top:833px;width:23px;height:3px;background:#111;border-radius:1px"></div>
<div style="left:1484px;top:886px;width:22px;height:3px;background:#111;border-radius:1px"></div>
<div style="left:1541px;top:886px;width:23px;height:3px;background:#111;border-radius:1px"></div>
<div style="left:1519px;top:446px;width:11px;height:462px;background:linear-gradient(90deg,#111,#2e2e2e 50%,#111)"></div>
<svg style="left:1489.5px;top:602px" width="72" height="77" viewBox="0 0 72 77"><defs><linearGradient id="kg1473" x1="0" y1="0" x2="0" y2="1"><stop offset="0" stop-color="#5e5e5c"/><stop offset="0.05" stop-color="#8a8886"/><stop offset="0.1" stop-color="#74726f"/><stop offset="0.15" stop-color="#2a2522"/><stop offset="0.48" stop-color="#1e1916"/><stop offset="0.56" stop-color="#2e2b28"/><stop offset="0.72" stop-color="#5c5b59"/><stop offset="0.84" stop-color="#898987"/><stop offset="0.885" stop-color="#3a3835"/><stop offset="0.95" stop-color="#1c1a18"/><stop offset="1" stop-color="#2a2826"/></linearGradient></defs><path d="M7 0 L65 0 Q72 0 71.5 8.5 Q66 38.5 71.5 68.5 Q72 77 65 77 L7 77 Q0 77 0.5 68.5 Q6 38.5 0.5 8.5 Q0 0 7 0 Z" fill="url(#kg1473)"/><rect x="10.5" y="36.9" width="51" height="3.3" fill="#e6e0da"/></svg>
<div class="sl" style="left:1782px;top:416px;width:101px;height:528px"></div>
<div class="mt" style="left:1883px;top:416px;width:43px;height:528px;"></div>
<div style="left:1888px;top:666px;width:17px;height:93px;background:#56c23e"></div>
<div style="left:1888px;top:759px;width:17px;height:185px;background:#3a8a28"></div>
<div style="left:1909px;top:666px;width:17px;height:93px;background:#56c23e"></div>
<div style="left:1909px;top:759px;width:17px;height:185px;background:#3a8a28"></div>
<div style="left:1793px;top:464px;width:22px;height:3px;background:#111;border-radius:1px"></div>
<div style="left:1850px;top:464px;width:23px;height:3px;background:#111;border-radius:1px"></div>
<div style="left:1793px;top:518px;width:22px;height:3px;background:#111;border-radius:1px"></div>
<div style="left:1850px;top:518px;width:23px;height:3px;background:#111;border-radius:1px"></div>
<div style="left:1793px;top:571px;width:22px;height:3px;background:#111;border-radius:1px"></div>
<div style="left:1850px;top:571px;width:23px;height:3px;background:#111;border-radius:1px"></div>
<div style="left:1793px;top:624px;width:22px;height:3px;background:#111;border-radius:1px"></div>
<div style="left:1850px;top:624px;width:23px;height:3px;background:#111;border-radius:1px"></div>
<div style="left:1793px;top:678px;width:22px;height:3px;background:#111;border-radius:1px"></div>
<div style="left:1850px;top:678px;width:23px;height:3px;background:#111;border-radius:1px"></div>
<div style="left:1793px;top:731px;width:22px;height:3px;background:#111;border-radius:1px"></div>
<div style="left:1850px;top:731px;width:23px;height:3px;background:#111;border-radius:1px"></div>
<div style="left:1793px;top:784px;width:22px;height:3px;background:#111;border-radius:1px"></div>
<div style="left:1850px;top:784px;width:23px;height:3px;background:#111;border-radius:1px"></div>
<div style="left:1793px;top:838px;width:22px;height:3px;background:#111;border-radius:1px"></div>
<div style="left:1850px;top:838px;width:23px;height:3px;background:#111;border-radius:1px"></div>
<div style="left:1793px;top:891px;width:22px;height:3px;background:#111;border-radius:1px"></div>
<div style="left:1850px;top:891px;width:23px;height:3px;background:#111;border-radius:1px"></div>
<div style="left:1828px;top:446px;width:11px;height:467px;background:linear-gradient(90deg,#111,#2e2e2e 50%,#111)"></div>
<svg style="left:1798.5px;top:427px" width="72" height="79.5" viewBox="0 0 72 79.5"><defs><linearGradient id="kg1782" x1="0" y1="0" x2="0" y2="1"><stop offset="0" stop-color="#5e5e5c"/><stop offset="0.05" stop-color="#8a8886"/><stop offset="0.1" stop-color="#74726f"/><stop offset="0.15" stop-color="#2a2522"/><stop offset="0.48" stop-color="#1e1916"/><stop offset="0.56" stop-color="#2e2b28"/><stop offset="0.72" stop-color="#5c5b59"/><stop offset="0.84" stop-color="#898987"/><stop offset="0.885" stop-color="#3a3835"/><stop offset="0.95" stop-color="#1c1a18"/><stop offset="1" stop-color="#2a2826"/></linearGradient></defs><path d="M7 0 L65 0 Q72 0 71.5 8.7 Q66 39.8 71.5 70.8 Q72 79.5 65 79.5 L7 79.5 Q0 79.5 0.5 70.8 Q6 39.8 0.5 8.7 Q0 0 7 0 Z" fill="url(#kg1782)"/><rect x="10.5" y="38.1" width="51" height="3.3" fill="#e6e0da"/></svg>
<div style="left:1003px;top:960px;width:133px;height:52px;background:#3b8a29;box-shadow:0 6px 8px rgba(0,0,0,0.45)"></div>
<div class="t" style="left:469.5px;width:1200px;text-align:center;top:969.8px;font-size:33px;color:#0c1a08;font-weight:normal;">CAM4</div>
<div style="left:1161px;top:960px;width:133px;height:52px;background:#3b8a29;box-shadow:0 6px 8px rgba(0,0,0,0.45)"></div>
<div class="t" style="left:627.5px;width:1200px;text-align:center;top:969.8px;font-size:33px;color:#0c1a08;font-weight:normal;">EXT</div>
<div style="left:1318px;top:960px;width:132px;height:52px;background:#3b8a29;box-shadow:0 6px 8px rgba(0,0,0,0.45)"></div>
<div class="t" style="left:784.0px;width:1200px;text-align:center;top:969.8px;font-size:33px;color:#0c1a08;font-weight:normal;">HipHop</div>
<div style="left:1473px;top:960px;width:133px;height:52px;background:#76f053;box-shadow:0 6px 8px rgba(0,0,0,0.45)"></div>
<div class="t" style="left:939.5px;width:1200px;text-align:center;top:969.8px;font-size:33px;color:#0c1a08;font-weight:normal;">Techno</div>
<div style="left:1782px;top:960px;width:133px;height:52px;background:#76f053;box-shadow:0 6px 8px rgba(0,0,0,0.45)"></div>
<div class="t" style="left:1248.5px;width:1200px;text-align:center;top:969.8px;font-size:33px;color:#0c1a08;font-weight:normal;">Master</div>
<div style="left:1316px;top:1036px;width:117px;height:117px;background:#e6e6e6;border-style:solid;border-width:8px 7px 7px 8px;border-color:#ffffff #9c9c9c #9c9c9c #ffffff;"></div>
<svg style="left:1335.5px;top:1054.5px" width="93" height="93" viewBox="-50 -50 100 100"><circle r="50" fill="#000"/><path d="M24.8 -27.3 A36.9 36.9 0 0 0 -36.9 0" stroke="#e4e4e4" stroke-width="9" fill="none"/><path d="M-48 0.4 L-25.7 0.4 L-36.6 14.6 Z" fill="#e4e4e4"/><path d="M36.9 2.4 A36.9 36.9 0 0 1 -23.2 28.7" stroke="#e4e4e4" stroke-width="9" fill="none"/><path d="M25.8 2.4 L48.5 2.4 L37.1 -10.5 Z" fill="#e4e4e4"/><g fill="#e4e4e4"><rect x="-5" y="-14.5" width="3.2" height="26"/><rect x="14.4" y="-14.5" width="3.2" height="22"/><rect x="-5" y="-14.5" width="22.6" height="3.4"/><ellipse cx="-9.8" cy="11.6" rx="5.8" ry="4.2" transform="rotate(-18 -9.8 11.6)"/><ellipse cx="10.6" cy="7.6" rx="5.8" ry="4.2" transform="rotate(-18 10.6 7.6)"/></g></svg>
<div style="left:1476px;top:1036px;width:117px;height:117px;background:#e6e6e6;border-style:solid;border-width:8px 7px 7px 8px;border-color:#ffffff #9c9c9c #9c9c9c #ffffff;"></div>
<svg style="left:1495.5px;top:1054.5px" width="93" height="93" viewBox="-50 -50 100 100"><circle r="50" fill="#000"/><path d="M24.8 -27.3 A36.9 36.9 0 0 0 -36.9 0" stroke="#e4e4e4" stroke-width="9" fill="none"/><path d="M-48 0.4 L-25.7 0.4 L-36.6 14.6 Z" fill="#e4e4e4"/><path d="M36.9 2.4 A36.9 36.9 0 0 1 -23.2 28.7" stroke="#e4e4e4" stroke-width="9" fill="none"/><path d="M25.8 2.4 L48.5 2.4 L37.1 -10.5 Z" fill="#e4e4e4"/><g fill="#e4e4e4"><rect x="-5" y="-14.5" width="3.2" height="26"/><rect x="14.4" y="-14.5" width="3.2" height="22"/><rect x="-5" y="-14.5" width="22.6" height="3.4"/><ellipse cx="-9.8" cy="11.6" rx="5.8" ry="4.2" transform="rotate(-18 -9.8 11.6)"/><ellipse cx="10.6" cy="7.6" rx="5.8" ry="4.2" transform="rotate(-18 10.6 7.6)"/></g></svg>
<div style="left:1967px;top:118px;width:723px;height:264px;background:#b4b4b4;border:2.5px solid #000;border-radius:20px;box-sizing:border-box"></div>
<div class="t" style="left:1737.9px;width:1200px;text-align:center;top:148.0px;font-size:38px;color:#000;font-weight:normal;transform:scaleX(0.976);">OUTPUTS</div>
<div style="left:2069px;top:167.9px;width:168.69999999999982px;height:3.6px;background-image:linear-gradient(90deg,transparent 0 5.967px,#000 5.967px 17.467px);background-size:17.467px 100%;background-repeat:repeat-x;background-position:right top"></div>
<div style="left:2438.5px;top:167.9px;width:150.5px;height:3.6px;background-image:linear-gradient(90deg,#000 0 11.5px,transparent 11.5px 17.375px);background-size:17.375px 100%;background-repeat:repeat-x;background-position:left top"></div>
<div style="left:2020px;top:215px;width:130.5px;height:129.5px;background:#e6e6e6;border-style:solid;border-width:8px 7px 7px 8px;border-color:#ffffff #9c9c9c #9c9c9c #ffffff;"></div>
<div style="left:2180px;top:215px;width:130.5px;height:129.5px;background:#e6e6e6;border-style:solid;border-width:8px 7px 7px 8px;border-color:#ffffff #9c9c9c #9c9c9c #ffffff;"></div>
<div style="left:2341px;top:215px;width:130.5px;height:129.5px;background:#e6e6e6;border-style:solid;border-width:8px 7px 7px 8px;border-color:#ffffff #9c9c9c #9c9c9c #ffffff;"></div>
<div style="left:2501px;top:215px;width:130.5px;height:129.5px;background:#e6e6e6;border-style:solid;border-width:8px 7px 7px 8px;border-color:#ffffff #9c9c9c #9c9c9c #ffffff;"></div>
<svg style="left:2039px;top:232.7px" width="107.4" height="107.4" viewBox="-50 -50 100 100"><defs><linearGradient id="yt" x1="0" y1="0" x2="0" y2="1"><stop offset="0" stop-color="#d5342a"/><stop offset="1" stop-color="#bd2a22"/></linearGradient></defs><circle r="50" fill="url(#yt)"/><text x="0" y="-7.5" text-anchor="middle" font-family="Liberation Sans" font-weight="bold" font-size="29.5" fill="#fff" transform="scale(0.6,1)" transform-origin="0 0">You</text><rect x="-23.3" y="-1.4" width="46.1" height="29.2" rx="7" fill="#fff"/><text x="0" y="21.8" text-anchor="middle" font-family="Liberation Sans" font-weight="bold" font-size="26" fill="#c42c24" transform="scale(0.62,1)" transform-origin="0 0">Tube</text></svg>
<svg style="left:2200.5px;top:234.5px" width="104" height="104" viewBox="-50 -50 100 100"><circle r="50" fill="#000"/><circle r="19" fill="#d62a1c"/></svg>
<div style="left:2370px;top:232px;width:85px;height:84px;border:2px solid #000;background:#fff;box-sizing:border-box"></div>
<svg style="left:2379px;top:241px" width="68.5" height="64.5" viewBox="0 0 68.5 64.5"><rect x="0" y="0" width="68.5" height="64.5" fill="#000"/><path d="M0 62.3 L26 25 L48.8 58 L57.5 46.7 L68.5 62.3 L68.5 64.5 L0 64.5 Z" fill="#e4e4e4"/><circle cx="49.3" cy="14.5" r="7" fill="#e4e4e4"/></svg>
<div class="t" style="left:1811.6999999999998px;width:1200px;text-align:center;top:313.6px;font-size:41.7px;color:#000;font-weight:normal;transform:scaleX(0.91);">EXT</div>
<div style="left:1967px;top:407px;width:725px;height:859px;background:#b4b4b4;border:2.5px solid #000;border-radius:20px;box-sizing:border-box"></div>
<div class="t" style="left:1738px;width:1200px;text-align:center;top:426.0px;font-size:38px;color:#111;font-weight:normal;">Scoreboard</div>
<div style="left:2025px;top:468px;width:201px;height:424px;background:#1f5799;border:2px solid #e8eef6;border-radius:22px;box-sizing:border-box"></div>
<div style="left:2049px;top:492px;width:136px;height:135px;background:#e6e6e6;border-style:solid;border-width:5px 5px 5px 5px;border-color:#ffffff #9c9c9c #9c9c9c #ffffff;box-shadow:4px 14px 16px rgba(0,0,0,0.35)"></div>
<svg style="left:2083.4px;top:536px" width="67.4" height="57.0" fill="#000"><rect x="0" y="30.50" width="37.30" height="6.00"/><rect x="15.70" y="14.30" width="6.00" height="38.70"/><path d="M45.40 10.70 L60.80 0.00 L67.40 0.00 L67.40 57.00 L60.20 57.00 L60.20 8.00 L45.40 16.60 Z"/></svg>
<div class="t" style="left:1525px;width:1200px;text-align:center;top:656.2px;font-size:46px;color:#fff;font-weight:normal;">Home</div>
<div style="left:2049px;top:721px;width:136px;height:135px;background:#e6e6e6;border-style:solid;border-width:5px 5px 5px 5px;border-color:#ffffff #9c9c9c #9c9c9c #ffffff;box-shadow:4px 14px 16px rgba(0,0,0,0.35)"></div>
<svg style="left:2087px;top:764.2px" width="52.7" height="57.0" fill="#000"><rect x="0" y="34.30" width="26.60" height="6.00"/><path d="M30.70 10.70 L46.10 0.00 L52.70 0.00 L52.70 57.00 L45.50 57.00 L45.50 8.00 L30.70 16.60 Z"/></svg>
<div style="left:2276px;top:502px;width:106px;height:104px;background:#ffff50;border-style:solid;border-width:5px 5px 5px 5px;border-color:#ffffff #9c9c9c #9c9c9c #ffffff;box-shadow:4px 14px 16px rgba(0,0,0,0.35)"></div>
<div class="t" style="left:1734px;width:1200px;text-align:center;top:525.7px;font-size:27px;color:#000;font-weight:normal;">Reset</div>
<div class="t" style="left:1734px;width:1200px;text-align:center;top:559.7px;font-size:27px;color:#000;font-weight:normal;">Score</div>
<div style="left:2471px;top:490px;width:136px;height:135px;background:#e6e6e6;border-style:solid;border-width:5px 5px 5px 5px;border-color:#ffffff #9c9c9c #9c9c9c #ffffff;box-shadow:4px 14px 16px rgba(0,0,0,0.35)"></div>
<svg style="left:2503.7px;top:533.2px" width="67.4" height="57.0" fill="#000"><rect x="0" y="30.50" width="37.30" height="6.00"/><rect x="15.70" y="14.30" width="6.00" height="38.70"/><path d="M45.40 10.70 L60.80 0.00 L67.40 0.00 L67.40 57.00 L60.20 57.00 L60.20 8.00 L45.40 16.60 Z"/></svg>
<div style="left:2271px;top:738px;width:116px;height:93px;background:#e6e6e6;border-style:solid;border-width:5px 5px 5px 5px;border-color:#ffffff #9c9c9c #9c9c9c #ffffff;box-shadow:4px 14px 16px rgba(0,0,0,0.35)"></div>
<div class="t" style="left:1734px;width:1200px;text-align:center;top:747.7px;font-size:36px;color:#000;font-weight:normal;">CAM</div>
<div class="t" style="left:1734px;width:1200px;text-align:center;top:793.7px;font-size:36px;color:#000;font-weight:normal;">Ovly</div>
<div style="left:2471px;top:724px;width:136px;height:135px;background:#e6e6e6;border-style:solid;border-width:5px 5px 5px 5px;border-color:#ffffff #9c9c9c #9c9c9c #ffffff;box-shadow:4px 14px 16px rgba(0,0,0,0.35)"></div>
<svg style="left:2507.7px;top:767px" width="52.7" height="57.0" fill="#000"><rect x="0" y="34.30" width="26.60" height="6.00"/><path d="M30.70 10.70 L46.10 0.00 L52.70 0.00 L52.70 57.00 L45.50 57.00 L45.50 8.00 L30.70 16.60 Z"/></svg>
<div style="left:1991px;top:967px;width:95px;height:94px;background:#e6e6e6;border-style:solid;border-width:5px 5px 5px 5px;border-color:#ffffff #9c9c9c #9c9c9c #ffffff;box-shadow:4px 14px 16px rgba(0,0,0,0.35)"></div>
<svg style="left:2022px;top:999.4px" width="35.3" height="38.2" fill="#000"><rect x="0" y="22.98" width="17.82" height="4.02"/><path d="M20.57 7.17 L30.89 0.00 L35.31 0.00 L35.31 38.19 L30.49 38.19 L30.49 5.36 L20.57 11.12 Z"/></svg>
<div style="left:2130px;top:967px;width:95px;height:94px;background:#e6e6e6;border-style:solid;border-width:5px 5px 5px 5px;border-color:#ffffff #9c9c9c #9c9c9c #ffffff;box-shadow:4px 14px 16px rgba(0,0,0,0.35)"></div>
<svg style="left:2156px;top:999.4px" width="45.2" height="38.2" fill="#000"><rect x="0" y="20.43" width="24.99" height="4.02"/><rect x="10.52" y="9.58" width="4.02" height="25.93"/><path d="M30.42 7.17 L40.74 0.00 L45.16 0.00 L45.16 38.19 L40.33 38.19 L40.33 5.36 L30.42 11.12 Z"/></svg>
<div style="left:2420px;top:967px;width:96px;height:94px;background:#e6e6e6;border-style:solid;border-width:5px 5px 5px 5px;border-color:#ffffff #9c9c9c #9c9c9c #ffffff;box-shadow:4px 14px 16px rgba(0,0,0,0.35)"></div>
<svg style="left:2451px;top:999.4px" width="35.3" height="38.2" fill="#000"><rect x="0" y="22.98" width="17.82" height="4.02"/><path d="M20.57 7.17 L30.89 0.00 L35.31 0.00 L35.31 38.19 L30.49 38.19 L30.49 5.36 L20.57 11.12 Z"/></svg>
<div style="left:2559px;top:967px;width:95px;height:94px;background:#e6e6e6;border-style:solid;border-width:5px 5px 5px 5px;border-color:#ffffff #9c9c9c #9c9c9c #ffffff;box-shadow:4px 14px 16px rgba(0,0,0,0.35)"></div>
<svg style="left:2585px;top:999.4px" width="45.2" height="38.2" fill="#000"><rect x="0" y="20.43" width="24.99" height="4.02"/><rect x="10.52" y="9.58" width="4.02" height="25.93"/><path d="M30.42 7.17 L40.74 0.00 L45.16 0.00 L45.16 38.19 L40.33 38.19 L40.33 5.36 L30.42 11.12 Z"/></svg>
<div style="left:2274px;top:983px;width:94px;height:67px;background:#ffff50;border-style:solid;border-width:5px 5px 5px 5px;border-color:#ffffff #9c9c9c #9c9c9c #ffffff;box-shadow:4px 14px 16px rgba(0,0,0,0.35)"></div>
<div class="t" style="left:1726px;width:1200px;text-align:center;top:988.1px;font-size:29px;color:#000;font-weight:normal;">Reset</div>
<div class="t" style="left:1726px;width:1200px;text-align:center;top:1022.6px;font-size:29px;color:#000;font-weight:normal;">Sets</div>
<div class="t" style="left:1734.9px;width:1200px;text-align:center;top:1100.0px;font-size:35px;color:#000;font-weight:normal;transform:scaleX(1.07);">Sets</div>
<div style="left:2048px;top:1118.1px;width:236px;height:3.6px;background-image:linear-gradient(90deg,transparent 0 5.769px,#000 5.769px 17.269px);background-size:17.269px 100%;background-repeat:repeat-x;background-position:right top"></div>
<div style="left:2386px;top:1118.1px;width:219px;height:3.6px;background-image:linear-gradient(90deg,#000 0 11.5px,transparent 11.5px 17.292px);background-size:17.292px 100%;background-repeat:repeat-x;background-position:left top"></div>
<div style="left:1996px;top:1159px;width:224px;height:62px;background:#f0983a;border-style:solid;border-width:5px 5px 5px 5px;border-color:#ffffff #9c9c9c #9c9c9c #ffffff;box-shadow:2px 4px 6px rgba(0,0,0,0.3)"></div>
<div style="left:2424px;top:1159px;width:223px;height:62px;background:#f0983a;border-style:solid;border-width:5px 5px 5px 5px;border-color:#ffffff #9c9c9c #9c9c9c #ffffff;box-shadow:2px 4px 6px rgba(0,0,0,0.3)"></div>
<div class="t" style="left:1513px;width:1200px;text-align:center;top:1176.7px;font-size:37px;color:#000;font-weight:normal;">TimeOut</div>
<div class="t" style="left:1940px;width:1200px;text-align:center;top:1176.7px;font-size:37px;color:#000;font-weight:normal;">TimeOut</div>
<div class="t" style="left:239.39999999999998px;width:1200px;text-align:center;top:1322.4px;font-size:37.3px;color:#fff;font-weight:normal;transform:scaleX(0.977);">PROGRAM</div>
<div style="left:86px;top:1341.9px;width:648.6px;height:3.6px;background-image:linear-gradient(90deg,transparent 0 6.197px,#fff 6.197px 17.697px);background-size:17.697px 100%;background-repeat:repeat-x;background-position:right top"></div>
<div style="left:944.8px;top:1341.9px;width:664.7px;height:3.6px;background-image:linear-gradient(90deg,#fff 0 11.5px,transparent 11.5px 17.654px);background-size:17.654px 100%;background-repeat:repeat-x;background-position:left top"></div>
<div style="left:40.6px;top:1396px;width:154.0px;height:153px;background:#000"></div>
<div class="pb" style="left:45.6px;top:1400px;width:144.0px;height:144px;"></div>
<div class="cc" style="left:56.599999999999994px;top:1411px;width:122.0px;height:122px;"></div>
<div class="t" style="left:-482.4px;width:1200px;text-align:center;top:1453.0px;font-size:38px;color:#111;font-weight:normal;">Black</div>
<div style="left:198.4px;top:1396px;width:153.99999999999997px;height:153px;background:#000"></div>
<div class="pb" style="left:203.4px;top:1400px;width:143.99999999999997px;height:144px;"></div>
<div class="cc" style="left:214.39999999999998px;top:1411px;width:122.0px;height:122px;"></div>
<div class="t" style="left:-324.6px;width:1200px;text-align:center;top:1430.6px;font-size:38px;color:#111;font-weight:normal;">Cam</div>
<div class="t" style="left:-324.6px;width:1200px;text-align:center;top:1475.3px;font-size:38px;color:#111;font-weight:normal;">1</div>
<div style="left:360.4px;top:1396px;width:154.0px;height:153px;background:#000"></div>
<div class="pr" style="left:365.4px;top:1400px;width:144.0px;height:144px;"></div>
<div class="cr" style="left:376.4px;top:1411px;width:122.0px;height:122px;"></div>
<div class="t" style="left:-162.60000000000002px;width:1200px;text-align:center;top:1430.6px;font-size:38px;color:#111;font-weight:normal;">Cam</div>
<div class="t" style="left:-162.60000000000002px;width:1200px;text-align:center;top:1475.3px;font-size:38px;color:#111;font-weight:normal;">2</div>
<div style="left:523px;top:1396px;width:154px;height:153px;background:#000"></div>
<div class="pb" style="left:528px;top:1400px;width:144px;height:144px;"></div>
<div class="cc" style="left:539px;top:1411px;width:122px;height:122px;"></div>
<div class="t" style="left:0px;width:1200px;text-align:center;top:1430.6px;font-size:38px;color:#111;font-weight:normal;">Cam</div>
<div class="t" style="left:0px;width:1200px;text-align:center;top:1475.3px;font-size:38px;color:#111;font-weight:normal;">3</div>
<div style="left:685.9px;top:1396px;width:154.0px;height:153px;background:#000"></div>
<div class="pb" style="left:690.9px;top:1400px;width:144.0px;height:144px;"></div>
<div class="cc" style="left:701.9px;top:1411px;width:122.0px;height:122px;"></div>
<div class="t" style="left:162.89999999999998px;width:1200px;text-align:center;top:1430.6px;font-size:38px;color:#111;font-weight:normal;">Cam</div>
<div class="t" style="left:162.89999999999998px;width:1200px;text-align:center;top:1475.3px;font-size:38px;color:#111;font-weight:normal;">4</div>
<div style="left:849.6px;top:1396px;width:154.0px;height:153px;background:#000"></div>
<div class="pb" style="left:854.6px;top:1400px;width:144.0px;height:144px;"></div>
<div class="cc" style="left:865.6px;top:1411px;width:122.0px;height:122px;"></div>
<div class="t" style="left:326.6px;width:1200px;text-align:center;top:1430.6px;font-size:38px;color:#111;font-weight:normal;">Cam</div>
<div class="t" style="left:326.6px;width:1200px;text-align:center;top:1475.3px;font-size:38px;color:#111;font-weight:normal;">5</div>
<div style="left:1012px;top:1396px;width:154px;height:153px;background:#000"></div>
<div class="pb" style="left:1017px;top:1400px;width:144px;height:144px;"></div>
<div class="cc" style="left:1028px;top:1411px;width:122px;height:122px;"></div>
<div class="t" style="left:489px;width:1200px;text-align:center;top:1430.6px;font-size:38px;color:#111;font-weight:normal;">Cam</div>
<div class="t" style="left:489px;width:1200px;text-align:center;top:1475.3px;font-size:38px;color:#111;font-weight:normal;">6</div>
<div style="left:1172px;top:1396px;width:154px;height:153px;background:#000"></div>
<div class="pb" style="left:1177px;top:1400px;width:144px;height:144px;"></div>
<div class="cc" style="left:1188px;top:1411px;width:122px;height:122px;"></div>
<div class="t" style="left:649px;width:1200px;text-align:center;top:1430.6px;font-size:38px;color:#111;font-weight:normal;">Open</div>
<div class="t" style="left:649px;width:1200px;text-align:center;top:1475.3px;font-size:38px;color:#111;font-weight:normal;">Page</div>
<div style="left:1332px;top:1396px;width:154px;height:153px;background:#000"></div>
<div class="pb" style="left:1337px;top:1400px;width:144px;height:144px;"></div>
<div class="cc" style="left:1348px;top:1411px;width:122px;height:122px;"></div>
<div style="left:1491.6px;top:1396px;width:154.0px;height:153px;background:#000"></div>
<div class="pb" style="left:1496.6px;top:1400px;width:144.0px;height:144px;"></div>
<div class="cc" style="left:1507.6px;top:1411px;width:122.0px;height:122px;"></div>
<div class="t" style="left:968.5999999999999px;width:1200px;text-align:center;top:1430.6px;font-size:38px;color:#111;font-weight:normal;">Colour</div>
<div class="t" style="left:968.5999999999999px;width:1200px;text-align:center;top:1475.3px;font-size:38px;color:#111;font-weight:normal;">Bar</div>
<div class="t" style="left:228.79999999999995px;width:1200px;text-align:center;top:1707.1px;font-size:37px;color:#fff;font-weight:normal;transform:scaleX(0.944);">PREVIEW</div>
<div style="left:70px;top:1726.5px;width:665.6px;height:3.6px;background-image:linear-gradient(90deg,transparent 0 6.178px,#fff 6.178px 17.678px);background-size:17.678px 100%;background-repeat:repeat-x;background-position:right top"></div>
<div style="left:923px;top:1726.5px;width:681.8px;height:3.6px;background-image:linear-gradient(90deg,#fff 0 11.5px,transparent 11.5px 17.639px);background-size:17.639px 100%;background-repeat:repeat-x;background-position:left top"></div>
<div style="left:35.7px;top:1769px;width:154.0px;height:153px;background:#000"></div>
<div class="pb" style="left:40.7px;top:1773px;width:144.0px;height:144px;"></div>
<div class="cc" style="left:51.7px;top:1784px;width:121.99999999999999px;height:122px;"></div>
<div class="t" style="left:-487.3px;width:1200px;text-align:center;top:1826.0px;font-size:38px;color:#111;font-weight:normal;">Black</div>
<div style="left:193px;top:1769px;width:154px;height:153px;background:#000"></div>
<div class="pb" style="left:198px;top:1773px;width:144px;height:144px;"></div>
<div class="cc" style="left:209px;top:1784px;width:122px;height:122px;"></div>
<div class="t" style="left:-330px;width:1200px;text-align:center;top:1803.6px;font-size:38px;color:#111;font-weight:normal;">Cam</div>
<div class="t" style="left:-330px;width:1200px;text-align:center;top:1848.3px;font-size:38px;color:#111;font-weight:normal;">1</div>
<div style="left:356px;top:1769px;width:154px;height:153px;background:#000"></div>
<div class="pb" style="left:361px;top:1773px;width:144px;height:144px;"></div>
<div class="cc" style="left:372px;top:1784px;width:122px;height:122px;"></div>
<div class="t" style="left:-167px;width:1200px;text-align:center;top:1803.6px;font-size:38px;color:#111;font-weight:normal;">Cam</div>
<div class="t" style="left:-167px;width:1200px;text-align:center;top:1848.3px;font-size:38px;color:#111;font-weight:normal;">2</div>
<div style="left:518.6px;top:1769px;width:154.0px;height:153px;background:#000"></div>
<div class="pb" style="left:523.6px;top:1773px;width:144.0px;height:144px;"></div>
<div class="cc" style="left:534.6px;top:1784px;width:122.0px;height:122px;"></div>
<div class="t" style="left:-4.399999999999977px;width:1200px;text-align:center;top:1803.6px;font-size:38px;color:#111;font-weight:normal;">Cam</div>
<div class="t" style="left:-4.399999999999977px;width:1200px;text-align:center;top:1848.3px;font-size:38px;color:#111;font-weight:normal;">3</div>
<div style="left:681.4px;top:1769px;width:154.0px;height:153px;background:#000"></div>
<div class="pg" style="left:686.4px;top:1773px;width:144.0px;height:144px;"></div>
<div class="cg" style="left:697.4px;top:1784px;width:122.0px;height:122px;"></div>
<div class="t" style="left:158.39999999999998px;width:1200px;text-align:center;top:1803.6px;font-size:38px;color:#111;font-weight:normal;">Cam</div>
<div class="t" style="left:158.39999999999998px;width:1200px;text-align:center;top:1848.3px;font-size:38px;color:#111;font-weight:normal;">4</div>
<div style="left:844.4px;top:1769px;width:154.0px;height:153px;background:#000"></div>
<div class="pb" style="left:849.4px;top:1773px;width:144.0px;height:144px;"></div>
<div class="cc" style="left:860.4px;top:1784px;width:122.0px;height:122px;"></div>
<div class="t" style="left:321.4px;width:1200px;text-align:center;top:1803.6px;font-size:38px;color:#111;font-weight:normal;">Cam</div>
<div class="t" style="left:321.4px;width:1200px;text-align:center;top:1848.3px;font-size:38px;color:#111;font-weight:normal;">5</div>
<div style="left:1006.6px;top:1769px;width:153.9999999999999px;height:153px;background:#000"></div>
<div class="pb" style="left:1011.6px;top:1773px;width:143.9999999999999px;height:144px;"></div>
<div class="cc" style="left:1022.5999999999999px;top:1784px;width:122.0px;height:122px;"></div>
<div class="t" style="left:483.5999999999999px;width:1200px;text-align:center;top:1803.6px;font-size:38px;color:#111;font-weight:normal;">Cam</div>
<div class="t" style="left:483.5999999999999px;width:1200px;text-align:center;top:1848.3px;font-size:38px;color:#111;font-weight:normal;">6</div>
<div style="left:1166.7px;top:1769px;width:154.0px;height:153px;background:#000"></div>
<div class="pb" style="left:1171.7px;top:1773px;width:144.0px;height:144px;"></div>
<div class="cc" style="left:1182.7px;top:1784px;width:122.0px;height:122px;"></div>
<div class="t" style="left:643.7px;width:1200px;text-align:center;top:1803.6px;font-size:38px;color:#111;font-weight:normal;">Open</div>
<div class="t" style="left:643.7px;width:1200px;text-align:center;top:1848.3px;font-size:38px;color:#111;font-weight:normal;">Page</div>
<div style="left:1326px;top:1769px;width:154px;height:153px;background:#000"></div>
<div class="pb" style="left:1331px;top:1773px;width:144px;height:144px;"></div>
<div class="cc" style="left:1342px;top:1784px;width:122px;height:122px;"></div>
<div style="left:1486.4px;top:1769px;width:154.0px;height:153px;background:#000"></div>
<div class="pb" style="left:1491.4px;top:1773px;width:144.0px;height:144px;"></div>
<div class="cc" style="left:1502.4px;top:1784px;width:122.0px;height:122px;"></div>
<div class="t" style="left:963.4000000000001px;width:1200px;text-align:center;top:1803.6px;font-size:38px;color:#111;font-weight:normal;">Colour</div>
<div class="t" style="left:963.4000000000001px;width:1200px;text-align:center;top:1848.3px;font-size:38px;color:#111;font-weight:normal;">Bar</div>
<div style="left:1711px;top:1316px;width:186px;height:122px;background:#e6e6e6;border-style:solid;border-width:4px 5px 5px 4px;border-color:#ffffff #9c9c9c #9c9c9c #ffffff;"></div>
<div class="t" style="left:1207px;width:1200px;text-align:center;top:1353.8px;font-size:54px;color:#000;font-weight:normal;transform:scaleX(0.95);">FTB</div>
<div style="left:1711px;top:1484px;width:188px;height:124px;background:#000;border-style:solid;border-width:4px 4px 4px 4px;border-color:#ffffff #a0a0a0 #a0a0a0 #ffffff;"></div>
<div style="left:1753px;top:1517px;width:112px;height:62px;background:#fff"></div>
<svg style="left:1778px;top:1528px" width="62" height="42" viewBox="0 0 62 42"><g stroke="#000" stroke-width="3.6" fill="none" stroke-linecap="butt"><path d="M3 3 L25 17"/><path d="M59 3 L37 17"/><path d="M3 39 L25 25"/><path d="M59 39 L37 25"/><path d="M2 1.5 L2 10 M1 2 L10 2"/><path d="M60 1.5 L60 10 M61 2 L52 2"/><path d="M2 40.5 L2 32 M1 40 L10 40"/><path d="M60 40.5 L60 32 M61 40 L52 40"/></g><g fill="#000"><path d="M28 20 L15 19 L22 10 Z"/><path d="M34 20 L47 19 L40 10 Z"/><path d="M28 22 L15 23 L22 32 Z"/><path d="M34 22 L47 23 L40 32 Z"/><rect x="30" y="11" width="2.4" height="20"/><rect x="21" y="20" width="20" height="2.4"/></g></svg>
<div style="left:1711px;top:1658px;width:188px;height:123px;background:#000;border-style:solid;border-width:4px 4px 4px 4px;border-color:#ffffff #a0a0a0 #a0a0a0 #ffffff;"></div>
<div style="left:1724px;top:1667px;width:171px;height:113px;background:radial-gradient(ellipse 62% 62% at 50% 50%,#555 0%,#8a8a8a 30%,#c8c8c8 62%,#f4f4f4 86%,#fff 100%);filter:blur(2.5px)"></div>
<div style="left:1704px;top:1821px;width:209px;height:154px;background:#000"></div>
<div style="left:1710px;top:1827px;width:197px;height:143px;border-radius:9px;background:linear-gradient(180deg,#f2f2f2 0%,#e2e2e2 35%,#b8b8b8 70%,#999 100%)"></div>
<div style="left:1725px;top:1838px;width:167px;height:122px;border-radius:50%;background:linear-gradient(180deg,#676767 0%,#8c8c8c 30%,#c6c6c6 65%,#ececec 88%,#f2f2f2 100%)"></div>
<div class="t" style="left:1206px;width:1200px;text-align:center;top:1870.8px;font-size:54px;color:#000;font-weight:normal;transform:scaleX(0.92);">CUT</div>
<div style="left:1967px;top:1313px;width:722px;height:668px;background:#b4b4b4;border:2.5px solid #000;border-radius:20px;box-sizing:border-box"></div>
<div style="left:2023px;top:1351px;width:148px;height:68px;background:#7b4b1b;border-style:solid;border-width:5px 5px 5px 5px;border-color:#ffffff #9c9c9c #9c9c9c #ffffff;box-shadow:3px 10px 12px rgba(0,0,0,0.35)"></div>
<div style="left:2196px;top:1351px;width:148px;height:68px;background:#8c5822;border-style:solid;border-width:5px 5px 5px 5px;border-color:#ffffff #9c9c9c #9c9c9c #ffffff;box-shadow:3px 10px 12px rgba(0,0,0,0.35)"></div>
<div style="left:2370px;top:1351px;width:148px;height:68px;background:#7b4b1b;border-style:solid;border-width:5px 5px 5px 5px;border-color:#ffffff #9c9c9c #9c9c9c #ffffff;box-shadow:3px 10px 12px rgba(0,0,0,0.35)"></div>
<div class="t" style="left:1502px;width:1200px;text-align:center;top:1368.7px;font-size:40px;color:#fff;font-weight:normal;">Rec On</div>
<div class="t" style="left:1675px;width:1200px;text-align:center;top:1368.7px;font-size:40px;color:#fff;font-weight:normal;">Rec Off</div>
<div class="t" style="left:1849px;width:1200px;text-align:center;top:1368.7px;font-size:40px;color:#fff;font-weight:normal;">Live</div>
<div class="t" style="left:1676.8000000000002px;width:1200px;text-align:center;top:1462.1px;font-size:37px;color:#000;font-weight:normal;transform:scaleX(0.954);">REPLAYS</div>
<div style="left:2051px;top:1481.5px;width:132px;height:3.6px;background-image:linear-gradient(90deg,transparent 0 5.714px,#000 5.714px 17.214px);background-size:17.214px 100%;background-repeat:repeat-x;background-position:right top"></div>
<div style="left:2368px;top:1481.5px;width:133px;height:3.6px;background-image:linear-gradient(90deg,#000 0 11.5px,transparent 11.5px 17.357px);background-size:17.357px 100%;background-repeat:repeat-x;background-position:left top"></div>
<div style="left:2178px;top:1527px;width:199px;height:198px;background:#8b561f;border-style:solid;border-width:7px 6px 6px 7px;border-color:#ffffff #9c9c9c #9c9c9c #ffffff;box-shadow:3px 10px 12px rgba(0,0,0,0.35)"></div>
<div class="t" style="left:1682px;width:1200px;text-align:center;top:1579.1px;font-size:104px;color:#fff;font-weight:normal;">-5</div>
<div style="left:2027px;top:1792px;width:147px;height:146px;background:#dcdcdc"></div>
<svg style="left:2042px;top:1828px" width="126" height="74" viewBox="0 0 126 74"><rect x="0" y="0" width="103" height="74" rx="18" fill="#000"/><path d="M96 26 L126 10 L126 64 L96 48 Z" fill="#000"/></svg>
<div class="t" style="left:1498px;width:1200px;text-align:center;top:1835.1px;font-size:56px;color:#fff;font-weight:normal;">1</div>
<div style="left:2208px;top:1792px;width:147px;height:146px;background:#dcdcdc"></div>
<svg style="left:2223px;top:1828px" width="126" height="74" viewBox="0 0 126 74"><rect x="0" y="0" width="103" height="74" rx="18" fill="#000"/><path d="M96 26 L126 10 L126 64 L96 48 Z" fill="#000"/></svg>
<div class="t" style="left:1679px;width:1200px;text-align:center;top:1835.1px;font-size:56px;color:#fff;font-weight:normal;">2</div>
<div style="left:2381px;top:1792px;width:147px;height:146px;background:#dcdcdc"></div>
<svg style="left:2396px;top:1828px" width="126" height="74" viewBox="0 0 126 74"><rect x="0" y="0" width="103" height="74" rx="18" fill="#000"/><path d="M96 26 L126 10 L126 64 L96 48 Z" fill="#000"/></svg>
<div class="t" style="left:1852px;width:1200px;text-align:center;top:1835.1px;font-size:56px;color:#fff;font-weight:normal;">3</div>
<div style="left:2607px;top:1387px;width:14px;height:553px;background:#000"></div>
<svg style="left:2566px;top:1873px" width="96" height="68" viewBox="0 0 96 68"><defs><linearGradient id="tb" x1="0" y1="0" x2="0" y2="1"><stop offset="0" stop-color="#8a8a8a"/><stop offset="0.3" stop-color="#f2f2f2"/><stop offset="0.6" stop-color="#d0d0d0"/><stop offset="1" stop-color="#6a6a6a"/></linearGradient></defs><path d="M6 6 Q48 -2 90 6 Q96 34 90 62 Q48 70 6 62 Q0 34 6 6 Z" fill="url(#tb)"/><rect x="45" y="0" width="5" height="68" fill="#111"/></svg></body></html>
